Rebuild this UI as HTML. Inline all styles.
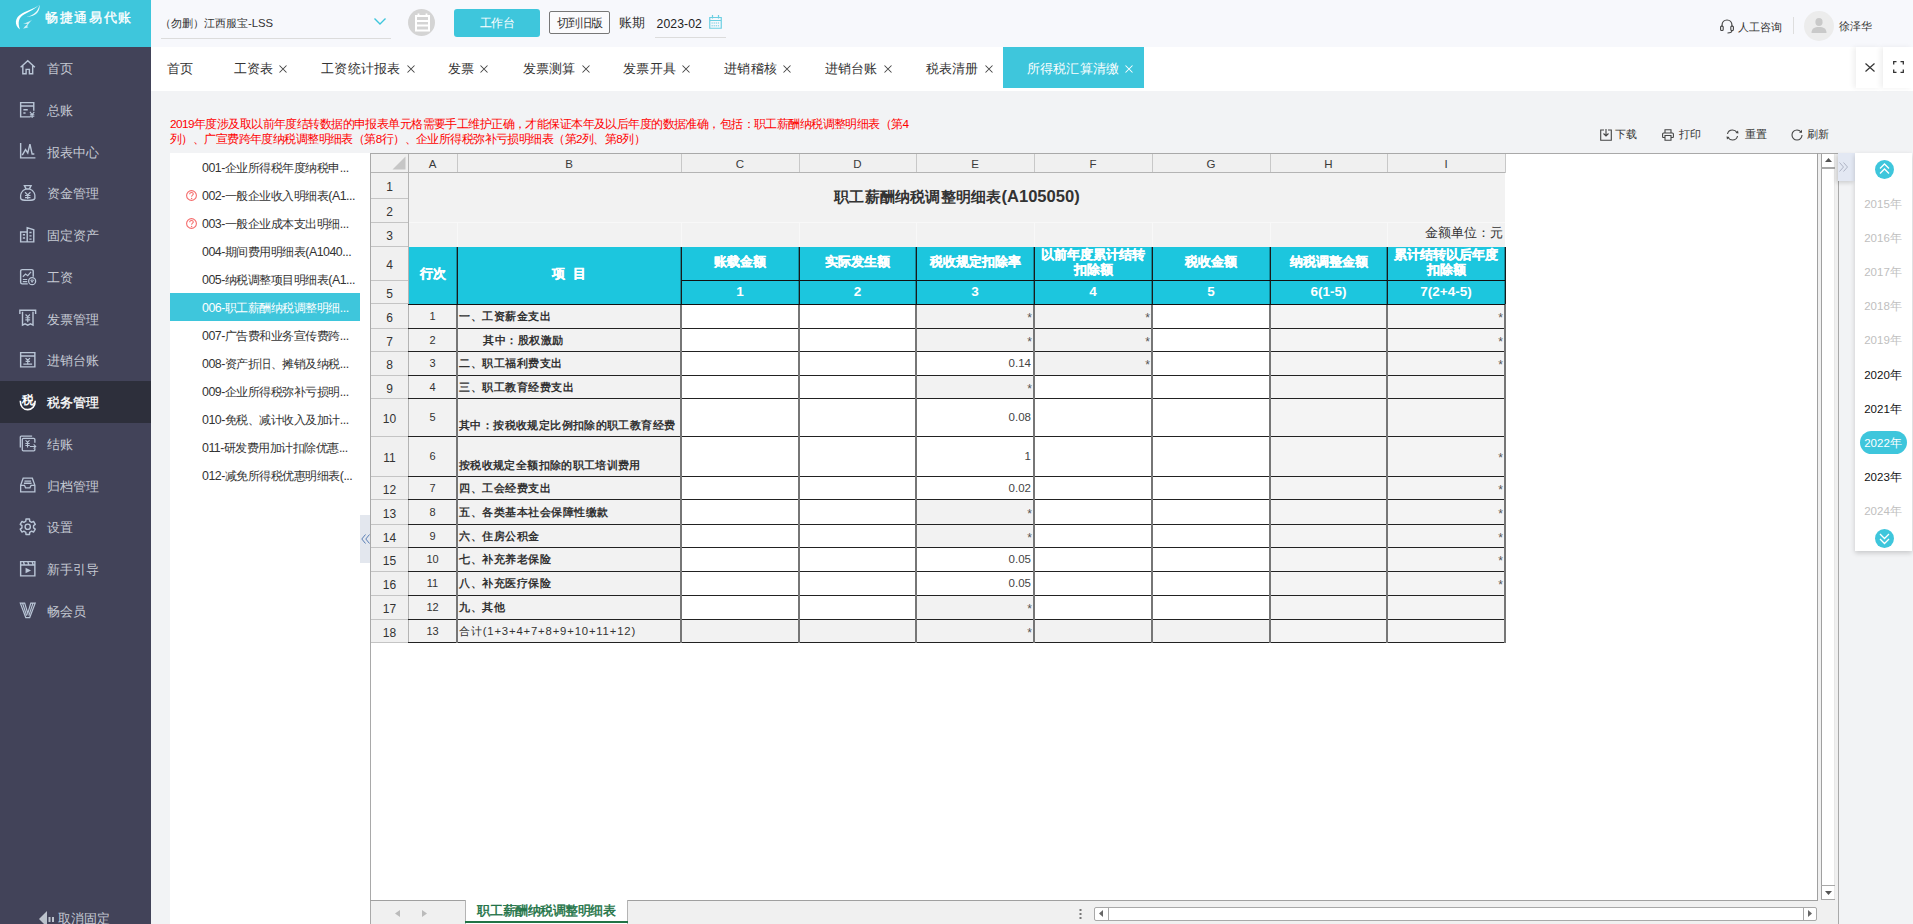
<!DOCTYPE html><html><head><meta charset="utf-8"><title>所得税汇算清缴</title><style>
*{box-sizing:border-box;margin:0;padding:0}
html,body{width:1913px;height:924px;overflow:hidden}
body{position:relative;background:#f2f3f5;font-family:"Liberation Sans",sans-serif;color:#333;}
.a{position:absolute;white-space:nowrap}
.t{position:absolute;white-space:nowrap;line-height:1}
svg{position:absolute;overflow:visible}
</style></head><body>
<div class="a" style="left:0;top:0;width:151px;height:924px;background:#424359"></div>
<div class="a" style="left:0;top:0;width:151px;height:47px;background:#3ec6dc"></div>
<svg style="left:10px;top:0px" width="40" height="35" viewBox="0 0 40 35"><path d="M10 29.5 C4 25 4.5 17.5 12 13.5 C18 10.5 25 8.5 29.4 4.8 C25.5 9 19.5 11.5 14 14.5 C8.5 17.5 7.5 23 10 29.5Z" fill="#fff"/><path d="M29.4 4.8 C30.5 10.5 26.5 16.8 16.5 16.9 C24 15.5 28.5 11 29.4 4.8Z" fill="#fff" opacity=".9"/><path d="M22.2 19.6 C19.5 21.8 16.5 23 13 23.6 L17.6 24 C15.8 25.6 14.2 27 13.2 28.7 C15.5 28.3 17 27.8 18.6 27.3 C16.5 27 16.8 25.5 22.2 19.6Z" fill="#fff" opacity=".75"/></svg>
<div class="t" style="left:45px;top:11.5px;font-size:12.6px;letter-spacing:1.7px;color:#fff;-webkit-text-stroke:0.35px #fff">畅捷通易代账</div>
<svg style="left:19px;top:58.8px" width="17.5" height="17.5" viewBox="0 0 16 16"><path d="M1.5 7.5 L8 1.5 L14.5 7.5 M3.5 6 V13.5 H6.5 V9.5 H9.5 V13.5 H12.5 V6" fill="none" stroke="#b9c5d6" stroke-width="1.3"/></svg>
<div class="t" style="left:47px;top:62.0px;font-size:13.3px;color:#c5c9d3">首页</div>
<svg style="left:19px;top:100.55px" width="17.5" height="17.5" viewBox="0 0 16 16"><path d="M10.5 14.5 H1.5 V1.5 H13.5 V9 M1.5 4.5 H13.5 M4 8 H8 M4 11 H6" fill="none" stroke="#b9c5d6" stroke-width="1.3"/><path d="M10 10 L12 12.5 L14 10 M10 12.5 H14 M10 14 H14 M12 12.5 V15.5" fill="none" stroke="#b9c5d6" stroke-width="1"/></svg>
<div class="t" style="left:47px;top:103.75px;font-size:13.3px;color:#c5c9d3">总账</div>
<svg style="left:19px;top:142.3px" width="17.5" height="17.5" viewBox="0 0 16 16"><path d="M1.5 1 V14.5 H15 M3 12 L6 7 L8 10 L10 2 L12 11 L14 11" fill="none" stroke="#b9c5d6" stroke-width="1.3"/></svg>
<div class="t" style="left:47px;top:145.5px;font-size:13.3px;color:#c5c9d3">报表中心</div>
<svg style="left:19px;top:184.05px" width="17.5" height="17.5" viewBox="0 0 16 16"><path d="M5 1.5 H11 L9.5 4.5 H6.5 Z M6.5 4.5 C2 6 1 10 1.5 13 C2 15 4 15 8 15 C12 15 14 15 14.5 13 C15 10 14 6 9.5 4.5" fill="none" stroke="#b9c5d6" stroke-width="1.3"/><path d="M5.5 7.5 L8 10 L10.5 7.5 M5.5 10.5 H10.5 M5.5 12.5 H10.5 M8 10 V14" fill="none" stroke="#b9c5d6" stroke-width="1.1"/></svg>
<div class="t" style="left:47px;top:187.25px;font-size:13.3px;color:#c5c9d3">资金管理</div>
<svg style="left:19px;top:225.8px" width="17.5" height="17.5" viewBox="0 0 16 16"><path d="M1.5 14.5 V5.5 H7.5 V1.5 L13.5 3.5 V14.5 Z M7.5 5.5 V14.5 M3.5 8 H5.5 M3.5 11 H5.5 M9.5 6 H11.5 M9.5 9 H11.5 M9.5 12 H11.5" fill="none" stroke="#b9c5d6" stroke-width="1.3"/></svg>
<div class="t" style="left:47px;top:229.0px;font-size:13.3px;color:#c5c9d3">固定资产</div>
<svg style="left:19px;top:267.55px" width="17.5" height="17.5" viewBox="0 0 16 16"><path d="M13 8 V3 C13 2 12.5 1.5 11.5 1.5 H3 C2 1.5 1.5 2 1.5 3 V13 C1.5 14 2 14.5 3 14.5 H8" fill="none" stroke="#b9c5d6" stroke-width="1.3"/><path d="M3.5 8 L6 5.5 L8 7 L11 3.5 M3.5 10.5 H7.5 M3.5 12.5 H7.5" fill="none" stroke="#b9c5d6" stroke-width="1.1"/><circle cx="12" cy="12" r="3.2" fill="none" stroke="#b9c5d6" stroke-width="1.2"/><path d="M10.8 11 H13.2 L12 13.2 Z" fill="none" stroke="#b9c5d6" stroke-width="0.9"/></svg>
<div class="t" style="left:47px;top:270.75px;font-size:13.3px;color:#c5c9d3">工资</div>
<svg style="left:19px;top:309.3px" width="17.5" height="17.5" viewBox="0 0 16 16"><path d="M0.8 4.5 V1.2 H15.2 V4.5" fill="none" stroke="#b9c5d6" stroke-width="1.3"/><path d="M3.2 2.5 V14.8 L5.5 13.6 L8 14.8 L10.5 13.6 L12.8 14.8 V2.5" fill="none" stroke="#b9c5d6" stroke-width="1.3"/><path d="M6 5 L8 7 L10 5 M5.8 8 H10.2 M5.8 10 H10.2 M8 7 V12" fill="none" stroke="#b9c5d6" stroke-width="1.1"/></svg>
<div class="t" style="left:47px;top:312.5px;font-size:13.3px;color:#c5c9d3">发票管理</div>
<svg style="left:19px;top:351.05px" width="17.5" height="17.5" viewBox="0 0 16 16"><path d="M1.5 1.5 H14.5 V14.5 H1.5 Z M1.5 4.5 H14.5 M4 12 H12" fill="none" stroke="#b9c5d6" stroke-width="1.3"/><path d="M6 6.5 L8 8.5 L10 6.5 M6 9.5 H10 M8 8.5 V12" fill="none" stroke="#b9c5d6" stroke-width="1.1"/></svg>
<div class="t" style="left:47px;top:354.25px;font-size:13.3px;color:#c5c9d3">进销台账</div>
<div class="a" style="left:0;top:381.0px;width:151px;height:42px;background:#2d2f3b"></div>
<svg style="left:19px;top:392.8px" width="17.5" height="17.5" viewBox="0 0 16 16"><path d="M1.2 7 C1.2 12 4 15.2 8 15.2 C12 15.2 14.8 12 14.8 7" fill="none" stroke="#fff" stroke-width="1.5"/><text x="8" y="10.5" font-size="11" fill="#fff" text-anchor="middle" font-weight="bold" font-family="Liberation Sans">税</text></svg>
<div class="t" style="left:47px;top:396.0px;font-size:13.3px;color:#fff;-webkit-text-stroke:0.3px #fff">税务管理</div>
<svg style="left:19px;top:434.55px" width="17.5" height="17.5" viewBox="0 0 16 16"><path d="M4 14.5 H13.5 C14 14.5 14.5 14 14.5 13.5 V12 M14.5 7 V4 C14.5 3.5 14 3 13.5 3 H4 C3.5 3 3 3.5 3 4 V13.5 C3 14 3.5 14.5 4 14.5 M1.2 11.5 V1.8 C1.2 1.4 1.5 1.1 1.9 1.1 H12" fill="none" stroke="#b9c5d6" stroke-width="1.2"/><path d="M6 4.8 L7.8 6.8 L9.6 4.8 M5.8 7.8 H9.8 M5.8 9.6 H9.8 M7.8 6.8 V11.5 M10 10.5 H15.2 M13.4 8.6 L15.3 10.5 L13.4 12.4" fill="none" stroke="#b9c5d6" stroke-width="1"/></svg>
<div class="t" style="left:47px;top:437.75px;font-size:13.3px;color:#c5c9d3">结账</div>
<svg style="left:19px;top:476.3px" width="17.5" height="17.5" viewBox="0 0 16 16"><path d="M1.5 8.5 L3.8 2 H12.2 L14.5 8.5 V14.5 H1.5 Z M1.5 8.5 H5 L6 10.8 H10 L11 8.5 H14.5 M5 4.6 H11 M4.5 6.6 H11.5" fill="none" stroke="#b9c5d6" stroke-width="1.2"/></svg>
<div class="t" style="left:47px;top:479.5px;font-size:13.3px;color:#c5c9d3">归档管理</div>
<svg style="left:19px;top:518.05px" width="17.5" height="17.5" viewBox="0 0 16 16"><path d="M6.38 0.98 L9.62 0.98 L9.76 2.89 L11.54 3.92 L13.27 3.09 L14.89 5.89 L13.30 6.97 L13.30 9.03 L14.89 10.11 L13.27 12.91 L11.54 12.08 L9.76 13.11 L9.62 15.02 L6.38 15.02 L6.24 13.11 L4.46 12.08 L2.73 12.91 L1.11 10.11 L2.70 9.03 L2.70 6.97 L1.11 5.89 L2.73 3.09 L4.46 3.92 L6.24 2.89Z" fill="none" stroke="#b9c5d6" stroke-width="1.3" stroke-linejoin="round"/><circle cx="8" cy="8" r="2.4" fill="none" stroke="#b9c5d6" stroke-width="1.3"/></svg>
<div class="t" style="left:47px;top:521.25px;font-size:13.3px;color:#c5c9d3">设置</div>
<svg style="left:19px;top:559.8px" width="17.5" height="17.5" viewBox="0 0 16 16"><path d="M1.5 1.5 H14.5 V14.5 H1.5 Z M1.5 4.5 H14.5 M4 1.5 L5 4.5 M8 1.5 L9 4.5 M12 1.5 L13 4.5" fill="none" stroke="#b9c5d6" stroke-width="1.3"/><path d="M6 7 L11 9.5 L6 12 Z" fill="#b9c5d6"/></svg>
<div class="t" style="left:47px;top:563.0px;font-size:13.3px;color:#c5c9d3">新手引导</div>
<svg style="left:19px;top:601.55px" width="17.5" height="17.5" viewBox="0 0 16 16"><path d="M1.2 1 H5.2 L8 10.5 L10.8 1 H14.8 L9.8 14.2 H6.2 Z M3.2 1 L7 12.5 M12.8 1 L9 12.5" fill="none" stroke="#b9c5d6" stroke-width="1.1"/></svg>
<div class="t" style="left:47px;top:604.75px;font-size:13.3px;color:#c5c9d3">畅会员</div>
<svg style="left:38px;top:910px" width="20" height="16" viewBox="0 0 20 16"><path d="M9 1 L1 9 L9 17 Z" fill="#bdc3cd"/><rect x="10.5" y="7" width="2" height="5" fill="#bdc3cd"/><rect x="14" y="7" width="2" height="5" fill="#bdc3cd"/></svg>
<div class="t" style="left:58px;top:912px;font-size:13px;color:#c5c9d3">取消固定</div>
<div class="a" style="left:151px;top:0;width:1762px;height:47px;background:#f7f8fc"></div>
<div class="t" style="left:160px;top:18px;font-size:11.3px;color:#333">（勿删）江西服宝-LSS</div>
<div class="a" style="left:161px;top:38px;width:230px;height:1px;background:#dcdcdc"></div>
<svg style="left:374px;top:18px" width="12" height="7" viewBox="0 0 12 7"><path d="M0.5 0.5 L6 6 L11.5 0.5" fill="none" stroke="#3ec6dc" stroke-width="1.4"/></svg>
<div class="a" style="left:408px;top:9px;width:27px;height:27px;border-radius:50%;background:#d4d4d4"></div>
<svg style="left:414px;top:13px" width="17" height="19" viewBox="0 0 17 19"><path d="M2 3 H15 V17.5 H2 Z" fill="none" stroke="#fff" stroke-width="2"/><path d="M4.5 0.5 V4 M12.5 0.5 V4" stroke="#fff" stroke-width="1.8"/><path d="M3 8 H14 M3 12.5 H14" stroke="#fff" stroke-width="1.8"/></svg>
<div class="a" style="left:454px;top:9px;width:86px;height:28px;border-radius:3px;background:#3ec6dc"></div>
<div class="t" style="left:480px;top:17px;font-size:12px;letter-spacing:-0.6px;color:#fff">工作台</div>
<div class="a" style="left:549px;top:11px;width:61px;height:23px;border-radius:2px;border:1px solid #777;background:#fbfbfd"></div>
<div class="t" style="left:557px;top:16.5px;font-size:11.6px;letter-spacing:-0.6px;color:#333">切到旧版</div>
<div class="t" style="left:619px;top:16px;font-size:13px;color:#333">账期</div>
<div class="t" style="left:656.5px;top:17.5px;font-size:12.2px;letter-spacing:0.1px;color:#222">2023-02</div>
<svg style="left:709px;top:15px" width="13" height="14" viewBox="0 0 13 14"><path d="M0.75 2.5 H12.25 V13.25 H0.75 Z M0.75 5.5 H12.25" fill="none" stroke="#6ccfe2" stroke-width="1.2"/><path d="M3.5 0 V3.5 M9.5 0 V3.5" stroke="#6ccfe2" stroke-width="1.2"/><path d="M2.5 8 H10.5 M2.5 10.8 H10.5" stroke="#6ccfe2" stroke-width="1" stroke-dasharray="1.3 0.8"/></svg>
<div class="a" style="left:655px;top:37px;width:71px;height:1px;background:#dcdcdc"></div>
<svg style="left:1720px;top:19px" width="14" height="15" viewBox="0 0 14 15"><path d="M2 8 V6.5 C2 3 4.3 1 7 1 C9.7 1 12 3 12 6.5 V8" fill="none" stroke="#444" stroke-width="1.2"/><rect x="0.6" y="7" width="2.6" height="4.5" rx="1" fill="none" stroke="#444" stroke-width="1.1"/><rect x="10.8" y="7" width="2.6" height="4.5" rx="1" fill="none" stroke="#444" stroke-width="1.1"/><path d="M12 11.5 C12 13 10 14 7.5 14" fill="none" stroke="#444" stroke-width="1.1"/></svg>
<div class="t" style="left:1738px;top:22px;font-size:11.1px;color:#333">人工咨询</div>
<div class="a" style="left:1793px;top:17px;width:1px;height:17px;background:#dedede"></div>
<div class="a" style="left:1804px;top:11px;width:30px;height:30px;border-radius:50%;background:#ececec"></div>
<svg style="left:1810px;top:17px" width="18" height="17" viewBox="0 0 18 17"><ellipse cx="9" cy="5" rx="3.6" ry="4" fill="#c9c9c9"/><path d="M1.5 16 C1.5 11.5 4.5 10 9 10 C13.5 10 16.5 11.5 16.5 16 Z" fill="#c9c9c9"/></svg>
<div class="t" style="left:1839px;top:21px;font-size:11.1px;color:#333">徐泽华</div>
<div class="a" style="left:151px;top:47px;width:1762px;height:44px;background:#fff"></div>
<div class="t" style="left:167.0px;top:62px;font-size:13.4px;letter-spacing:0.25px;color:#333">首页</div>
<div class="t" style="left:233.5px;top:62px;font-size:13.4px;letter-spacing:0.25px;color:#333">工资表</div>
<svg style="left:279.2px;top:65px" width="8" height="8" viewBox="0 0 8 8"><path d="M0.5 0.5 L7.5 7.5 M7.5 0.5 L0.5 7.5" stroke="#444" stroke-width="1.05"/></svg>
<div class="t" style="left:321.0px;top:62px;font-size:13.4px;letter-spacing:0.25px;color:#333">工资统计报表</div>
<svg style="left:406.9px;top:65px" width="8" height="8" viewBox="0 0 8 8"><path d="M0.5 0.5 L7.5 7.5 M7.5 0.5 L0.5 7.5" stroke="#444" stroke-width="1.05"/></svg>
<div class="t" style="left:447.5px;top:62px;font-size:13.4px;letter-spacing:0.25px;color:#333">发票</div>
<svg style="left:479.8px;top:65px" width="8" height="8" viewBox="0 0 8 8"><path d="M0.5 0.5 L7.5 7.5 M7.5 0.5 L0.5 7.5" stroke="#444" stroke-width="1.05"/></svg>
<div class="t" style="left:522.5px;top:62px;font-size:13.4px;letter-spacing:0.25px;color:#333">发票测算</div>
<svg style="left:581.6px;top:65px" width="8" height="8" viewBox="0 0 8 8"><path d="M0.5 0.5 L7.5 7.5 M7.5 0.5 L0.5 7.5" stroke="#444" stroke-width="1.05"/></svg>
<div class="t" style="left:623.0px;top:62px;font-size:13.4px;letter-spacing:0.25px;color:#333">发票开具</div>
<svg style="left:682.1px;top:65px" width="8" height="8" viewBox="0 0 8 8"><path d="M0.5 0.5 L7.5 7.5 M7.5 0.5 L0.5 7.5" stroke="#444" stroke-width="1.05"/></svg>
<div class="t" style="left:724.0px;top:62px;font-size:13.4px;letter-spacing:0.25px;color:#333">进销稽核</div>
<svg style="left:783.1px;top:65px" width="8" height="8" viewBox="0 0 8 8"><path d="M0.5 0.5 L7.5 7.5 M7.5 0.5 L0.5 7.5" stroke="#444" stroke-width="1.05"/></svg>
<div class="t" style="left:824.5px;top:62px;font-size:13.4px;letter-spacing:0.25px;color:#333">进销台账</div>
<svg style="left:883.6px;top:65px" width="8" height="8" viewBox="0 0 8 8"><path d="M0.5 0.5 L7.5 7.5 M7.5 0.5 L0.5 7.5" stroke="#444" stroke-width="1.05"/></svg>
<div class="t" style="left:925.5px;top:62px;font-size:13.4px;letter-spacing:0.25px;color:#333">税表清册</div>
<svg style="left:984.6px;top:65px" width="8" height="8" viewBox="0 0 8 8"><path d="M0.5 0.5 L7.5 7.5 M7.5 0.5 L0.5 7.5" stroke="#444" stroke-width="1.05"/></svg>
<div class="a" style="left:1003px;top:47px;width:141px;height:41px;background:#3ec6dc"></div>
<div class="t" style="left:1026.5px;top:62px;font-size:13.4px;letter-spacing:0.3px;color:#fff">所得税汇算清缴</div>
<svg style="left:1125px;top:65px" width="8" height="8" viewBox="0 0 8 8"><path d="M0.5 0.5 L7.5 7.5 M7.5 0.5 L0.5 7.5" stroke="#fff" stroke-width="1.05"/></svg>
<div class="a" style="left:1856px;top:47px;width:26px;height:41px;background:#fff;box-shadow:-3px 0 5px rgba(0,0,0,0.06)"></div>
<div class="a" style="left:1883px;top:47px;width:30px;height:41px;background:#fff;box-shadow:-3px 0 5px rgba(0,0,0,0.06)"></div>
<svg style="left:1865px;top:63px" width="10" height="9" viewBox="0 0 10 9"><path d="M0.5 0.5 L9.5 8.5 M9.5 0.5 L0.5 8.5" stroke="#333" stroke-width="1.2"/></svg>
<svg style="left:1893px;top:61px" width="11" height="12" viewBox="0 0 11 12"><path d="M0.7 3.5 V0.7 H3.5 M7.5 0.7 H10.3 V3.5 M10.3 8.5 V11.3 H7.5 M3.5 11.3 H0.7 V8.5" fill="none" stroke="#333" stroke-width="1.3"/></svg>
<div class="t" style="left:170px;top:116.5px;font-size:11.8px;letter-spacing:-0.57px;color:#f00;line-height:15px">2019年度涉及取以前年度结转数据的申报表单元格需要手工维护正确，才能保证本年及以后年度的数据准确，包括：职工薪酬纳税调整明细表（第4<br>列）、广宣费跨年度纳税调整明细表（第8行）、企业所得税弥补亏损明细表（第2列、第8列）</div>
<svg style="left:1599.5px;top:129px" width="13" height="12" viewBox="0 0 13 12"><path d="M4 1 H0.7 V11.3 H11.3 V1 H8" fill="none" stroke="#444" stroke-width="1.1"/><path d="M6 0 V7 M3.5 4.5 L6 7 L8.5 4.5" fill="none" stroke="#444" stroke-width="1.1"/></svg>
<div class="t" style="left:1615px;top:129px;font-size:11.1px;color:#333">下载</div>
<svg style="left:1661.5px;top:129px" width="13" height="12" viewBox="0 0 13 12"><path d="M3 4 V0.8 H9 V4 M3 8.5 H1 C0.7 8.5 0.6 8 0.6 7.5 V5 C0.6 4.3 1 4 1.6 4 H10.4 C11 4 11.4 4.3 11.4 5 V7.5 C11.4 8 11.2 8.5 11 8.5 H9 M3 6.5 H9 V11.3 H3 Z" fill="none" stroke="#444" stroke-width="1.1"/></svg>
<div class="t" style="left:1679px;top:129px;font-size:11.1px;color:#333">打印</div>
<svg style="left:1725.5px;top:129px" width="13" height="12" viewBox="0 0 13 12"><path d="M1.5 5 C2 2.5 4 1 6.5 1 C8.5 1 10 2 11 3.5 M11.5 7 C11 9.5 9 11 6.5 11 C4.5 11 3 10 2 8.5" fill="none" stroke="#444" stroke-width="1.1"/><path d="M9.5 4 L12.5 4.5 L12 1.5 Z M3.5 8 L0.5 7.5 L1 10.5 Z" fill="#444"/></svg>
<div class="t" style="left:1744.5px;top:129px;font-size:11.1px;color:#333">重置</div>
<svg style="left:1791px;top:129px" width="13" height="12" viewBox="0 0 13 12"><path d="M10 3 C9 1.7 7.6 1 6 1 C3.2 1 1 3.2 1 6 C1 8.8 3.2 11 6 11 C8.8 11 11 8.8 11 6" fill="none" stroke="#444" stroke-width="1.1"/><path d="M8 3.8 L11 3.8 L11 0.8 Z" fill="#444"/></svg>
<div class="t" style="left:1807px;top:129px;font-size:11.1px;color:#333">刷新</div>
<div class="a" style="left:170px;top:153px;width:200px;height:771px;background:#fff"></div>
<div class="t" style="left:202px;top:162px;font-size:12.4px;letter-spacing:-0.5px;color:#333">001-企业所得税年度纳税申...</div>
<div class="t" style="left:202px;top:190px;font-size:12.4px;letter-spacing:-0.5px;color:#333">002-一般企业收入明细表(A1...</div>
<svg style="left:186px;top:190px" width="11" height="11" viewBox="0 0 11 11"><circle cx="5.5" cy="5.5" r="4.9" fill="none" stroke="#f56c6c" stroke-width="1.1"/><path d="M3.7 4.3 C3.7 3 4.5 2.4 5.5 2.4 C6.5 2.4 7.3 3 7.3 4 C7.3 5.1 5.6 5.3 5.6 6.7" fill="none" stroke="#f56c6c" stroke-width="1.05"/><circle cx="5.6" cy="8.4" r="0.7" fill="#f56c6c"/></svg>
<div class="t" style="left:202px;top:218px;font-size:12.4px;letter-spacing:-0.5px;color:#333">003-一般企业成本支出明细...</div>
<svg style="left:186px;top:218px" width="11" height="11" viewBox="0 0 11 11"><circle cx="5.5" cy="5.5" r="4.9" fill="none" stroke="#f56c6c" stroke-width="1.1"/><path d="M3.7 4.3 C3.7 3 4.5 2.4 5.5 2.4 C6.5 2.4 7.3 3 7.3 4 C7.3 5.1 5.6 5.3 5.6 6.7" fill="none" stroke="#f56c6c" stroke-width="1.05"/><circle cx="5.6" cy="8.4" r="0.7" fill="#f56c6c"/></svg>
<div class="t" style="left:202px;top:246px;font-size:12.4px;letter-spacing:-0.5px;color:#333">004-期间费用明细表(A1040...</div>
<div class="t" style="left:202px;top:274px;font-size:12.4px;letter-spacing:-0.5px;color:#333">005-纳税调整项目明细表(A1...</div>
<div class="a" style="left:170px;top:293px;width:190px;height:28px;background:#3ec6dc"></div>
<div class="t" style="left:202px;top:302px;font-size:12.4px;letter-spacing:-0.5px;color:#fff">006-职工薪酬纳税调整明细...</div>
<div class="t" style="left:202px;top:330px;font-size:12.4px;letter-spacing:-0.5px;color:#333">007-广告费和业务宣传费跨...</div>
<div class="t" style="left:202px;top:358px;font-size:12.4px;letter-spacing:-0.5px;color:#333">008-资产折旧、摊销及纳税...</div>
<div class="t" style="left:202px;top:386px;font-size:12.4px;letter-spacing:-0.5px;color:#333">009-企业所得税弥补亏损明...</div>
<div class="t" style="left:202px;top:414px;font-size:12.4px;letter-spacing:-0.5px;color:#333">010-免税、减计收入及加计...</div>
<div class="t" style="left:202px;top:442px;font-size:12.4px;letter-spacing:-0.5px;color:#333">011-研发费用加计扣除优惠...</div>
<div class="t" style="left:202px;top:470px;font-size:12.4px;letter-spacing:-0.5px;color:#333">012-减免所得税优惠明细表(...</div>
<div class="a" style="left:360px;top:515px;width:10px;height:48px;background:#e3e7ee"></div>
<svg style="left:361px;top:534px" width="9" height="10" viewBox="0 0 9 10"><path d="M4.5 0.5 L0.8 5 L4.5 9.5 M8.5 0.5 L4.8 5 L8.5 9.5" fill="none" stroke="#5a7fb5" stroke-width="1"/></svg>
<div class="a" style="left:370px;top:153px;width:1468px;height:771px;background:#f0f0f0"></div>
<div class="a" style="left:371px;top:154px;width:1447px;height:747px;background:#fff"></div>
<div class="a" style="left:370px;top:153px;width:1468px;height:1px;background:#a9a9a9"></div>
<div class="a" style="left:370px;top:153px;width:1px;height:771px;background:#a9a9a9"></div>
<div class="a" style="left:1817px;top:153px;width:1px;height:748px;background:#a0a0a0"></div>
<div class="a" style="left:370px;top:900px;width:1448px;height:1px;background:#a0a0a0"></div>
<div class="a" style="left:1838px;top:153px;width:1px;height:771px;background:#a9a9a9"></div>
<div class="a" style="left:371px;top:154px;width:1134px;height:19px;background:#f0f0f0"></div>
<div class="a" style="left:371px;top:173px;width:37px;height:470px;background:#f0f0f0"></div>
<svg style="left:392px;top:156px" width="14" height="14" viewBox="0 0 14 14"><path d="M13.5 0.5 V13.5 H0.5 Z" fill="#c6c6c6"/></svg>
<div class="t" style="left:408px;top:158.5px;width:49px;text-align:center;font-size:11.5px;color:#3a3a3a">A</div>
<div class="a" style="left:457px;top:154px;width:1px;height:19px;background:#c8c8c8"></div>
<div class="t" style="left:457px;top:158.5px;width:224px;text-align:center;font-size:11.5px;color:#3a3a3a">B</div>
<div class="a" style="left:681px;top:154px;width:1px;height:19px;background:#c8c8c8"></div>
<div class="t" style="left:681px;top:158.5px;width:118px;text-align:center;font-size:11.5px;color:#3a3a3a">C</div>
<div class="a" style="left:799px;top:154px;width:1px;height:19px;background:#c8c8c8"></div>
<div class="t" style="left:799px;top:158.5px;width:117px;text-align:center;font-size:11.5px;color:#3a3a3a">D</div>
<div class="a" style="left:916px;top:154px;width:1px;height:19px;background:#c8c8c8"></div>
<div class="t" style="left:916px;top:158.5px;width:118px;text-align:center;font-size:11.5px;color:#3a3a3a">E</div>
<div class="a" style="left:1034px;top:154px;width:1px;height:19px;background:#c8c8c8"></div>
<div class="t" style="left:1034px;top:158.5px;width:118px;text-align:center;font-size:11.5px;color:#3a3a3a">F</div>
<div class="a" style="left:1152px;top:154px;width:1px;height:19px;background:#c8c8c8"></div>
<div class="t" style="left:1152px;top:158.5px;width:118px;text-align:center;font-size:11.5px;color:#3a3a3a">G</div>
<div class="a" style="left:1270px;top:154px;width:1px;height:19px;background:#c8c8c8"></div>
<div class="t" style="left:1270px;top:158.5px;width:117px;text-align:center;font-size:11.5px;color:#3a3a3a">H</div>
<div class="a" style="left:1387px;top:154px;width:1px;height:19px;background:#c8c8c8"></div>
<div class="t" style="left:1387px;top:158.5px;width:118px;text-align:center;font-size:11.5px;color:#3a3a3a">I</div>
<div class="a" style="left:1505px;top:154px;width:1px;height:19px;background:#c8c8c8"></div>
<div class="a" style="left:408px;top:154px;width:1px;height:489px;background:#b4b4b4"></div>
<div class="a" style="left:371px;top:172px;width:1134px;height:1px;background:#b4b4b4"></div>
<div class="t" style="left:371px;top:181.0px;width:37px;text-align:center;font-size:12px;color:#333">1</div>
<div class="a" style="left:371px;top:198px;width:37px;height:1px;background:#c4c4c4"></div>
<div class="t" style="left:371px;top:206.0px;width:37px;text-align:center;font-size:12px;color:#333">2</div>
<div class="a" style="left:371px;top:222px;width:37px;height:1px;background:#c4c4c4"></div>
<div class="t" style="left:371px;top:230.0px;width:37px;text-align:center;font-size:12px;color:#333">3</div>
<div class="a" style="left:371px;top:246px;width:37px;height:1px;background:#c4c4c4"></div>
<div class="t" style="left:371px;top:259.0px;width:37px;text-align:center;font-size:12px;color:#333">4</div>
<div class="a" style="left:371px;top:280px;width:37px;height:1px;background:#c4c4c4"></div>
<div class="t" style="left:371px;top:287.5px;width:37px;text-align:center;font-size:12px;color:#333">5</div>
<div class="a" style="left:371px;top:303px;width:37px;height:1px;background:#c4c4c4"></div>
<div class="t" style="left:371px;top:311.5px;width:37px;text-align:center;font-size:12px;color:#333">6</div>
<div class="a" style="left:371px;top:328px;width:37px;height:1px;background:#c4c4c4"></div>
<div class="t" style="left:371px;top:335.5px;width:37px;text-align:center;font-size:12px;color:#333">7</div>
<div class="a" style="left:371px;top:351px;width:37px;height:1px;background:#c4c4c4"></div>
<div class="t" style="left:371px;top:359.0px;width:37px;text-align:center;font-size:12px;color:#333">8</div>
<div class="a" style="left:371px;top:375px;width:37px;height:1px;background:#c4c4c4"></div>
<div class="t" style="left:371px;top:382.5px;width:37px;text-align:center;font-size:12px;color:#333">9</div>
<div class="a" style="left:371px;top:398px;width:37px;height:1px;background:#c4c4c4"></div>
<div class="t" style="left:371px;top:413.0px;width:37px;text-align:center;font-size:12px;color:#333">10</div>
<div class="a" style="left:371px;top:436px;width:37px;height:1px;background:#c4c4c4"></div>
<div class="t" style="left:371px;top:452.0px;width:37px;text-align:center;font-size:12px;color:#333">11</div>
<div class="a" style="left:371px;top:476px;width:37px;height:1px;background:#c4c4c4"></div>
<div class="t" style="left:371px;top:483.5px;width:37px;text-align:center;font-size:12px;color:#333">12</div>
<div class="a" style="left:371px;top:499px;width:37px;height:1px;background:#c4c4c4"></div>
<div class="t" style="left:371px;top:507.5px;width:37px;text-align:center;font-size:12px;color:#333">13</div>
<div class="a" style="left:371px;top:524px;width:37px;height:1px;background:#c4c4c4"></div>
<div class="t" style="left:371px;top:531.5px;width:37px;text-align:center;font-size:12px;color:#333">14</div>
<div class="a" style="left:371px;top:547px;width:37px;height:1px;background:#c4c4c4"></div>
<div class="t" style="left:371px;top:555.0px;width:37px;text-align:center;font-size:12px;color:#333">15</div>
<div class="a" style="left:371px;top:571px;width:37px;height:1px;background:#c4c4c4"></div>
<div class="t" style="left:371px;top:579.0px;width:37px;text-align:center;font-size:12px;color:#333">16</div>
<div class="a" style="left:371px;top:595px;width:37px;height:1px;background:#c4c4c4"></div>
<div class="t" style="left:371px;top:603.0px;width:37px;text-align:center;font-size:12px;color:#333">17</div>
<div class="a" style="left:371px;top:619px;width:37px;height:1px;background:#c4c4c4"></div>
<div class="t" style="left:371px;top:626.5px;width:37px;text-align:center;font-size:12px;color:#333">18</div>
<div class="a" style="left:371px;top:642px;width:37px;height:1px;background:#c4c4c4"></div>
<div class="a" style="left:409px;top:173px;width:1096px;height:74px;background:#f2f2f2"></div>
<div class="a" style="left:409px;top:222px;width:1096px;height:1px;background:#f8f8f8"></div>
<div class="a" style="left:457px;top:223px;width:1px;height:24px;background:#f8f8f8"></div>
<div class="a" style="left:681px;top:223px;width:1px;height:24px;background:#f8f8f8"></div>
<div class="a" style="left:799px;top:223px;width:1px;height:24px;background:#f8f8f8"></div>
<div class="a" style="left:916px;top:223px;width:1px;height:24px;background:#f8f8f8"></div>
<div class="a" style="left:1034px;top:223px;width:1px;height:24px;background:#f8f8f8"></div>
<div class="a" style="left:1152px;top:223px;width:1px;height:24px;background:#f8f8f8"></div>
<div class="a" style="left:1270px;top:223px;width:1px;height:24px;background:#f8f8f8"></div>
<div class="a" style="left:1387px;top:223px;width:1px;height:24px;background:#f8f8f8"></div>
<div class="t" style="left:409px;top:189px;width:1096px;text-align:center;font-size:15px;font-weight:bold;color:#333"><span style="letter-spacing:0.2px">职工薪酬纳税调整明细表</span><span style="font-size:16.6px;position:relative;top:-0.5px">(A105050)</span></div>
<div class="t" style="left:1387px;top:226.5px;width:116px;text-align:right;font-size:12.5px;color:#333">金额单位：元</div>
<div class="a" style="left:409px;top:247px;width:1096px;height:57px;background:#1cc6de"></div>
<div class="t" style="left:408px;top:267px;width:49px;text-align:center;font-size:13.3px;font-weight:bold;color:#fff;-webkit-text-stroke:0.3px #fff;line-height:14.5px">行次</div>
<div class="t" style="left:457px;top:267px;width:224px;text-align:center;font-size:13.3px;font-weight:bold;color:#fff;-webkit-text-stroke:0.3px #fff;line-height:14.5px">项&nbsp;&nbsp;目</div>
<div class="t" style="left:681px;top:255px;width:118px;text-align:center;font-size:13.3px;font-weight:bold;color:#fff;-webkit-text-stroke:0.3px #fff;line-height:14.5px">账载金额</div>
<div class="t" style="left:799px;top:255px;width:117px;text-align:center;font-size:13.3px;font-weight:bold;color:#fff;-webkit-text-stroke:0.3px #fff;line-height:14.5px">实际发生额</div>
<div class="t" style="left:916px;top:255px;width:118px;text-align:center;font-size:13.3px;font-weight:bold;color:#fff;-webkit-text-stroke:0.3px #fff;line-height:14.5px">税收规定扣除率</div>
<div class="t" style="left:1034px;top:248px;width:118px;text-align:center;font-size:13.3px;font-weight:bold;color:#fff;-webkit-text-stroke:0.3px #fff;line-height:14.5px">以前年度累计结转<br>扣除额</div>
<div class="t" style="left:1152px;top:255px;width:118px;text-align:center;font-size:13.3px;font-weight:bold;color:#fff;-webkit-text-stroke:0.3px #fff;line-height:14.5px">税收金额</div>
<div class="t" style="left:1270px;top:255px;width:117px;text-align:center;font-size:13.3px;font-weight:bold;color:#fff;-webkit-text-stroke:0.3px #fff;line-height:14.5px">纳税调整金额</div>
<div class="t" style="left:1387px;top:248px;width:118px;text-align:center;font-size:13.3px;font-weight:bold;color:#fff;-webkit-text-stroke:0.3px #fff;line-height:14.5px">累计结转以后年度<br>扣除额</div>
<div class="t" style="left:681px;top:285px;width:118px;text-align:center;font-size:13.5px;font-weight:bold;color:#fff">1</div>
<div class="t" style="left:799px;top:285px;width:117px;text-align:center;font-size:13.5px;font-weight:bold;color:#fff">2</div>
<div class="t" style="left:916px;top:285px;width:118px;text-align:center;font-size:13.5px;font-weight:bold;color:#fff">3</div>
<div class="t" style="left:1034px;top:285px;width:118px;text-align:center;font-size:13.5px;font-weight:bold;color:#fff">4</div>
<div class="t" style="left:1152px;top:285px;width:118px;text-align:center;font-size:13.5px;font-weight:bold;color:#fff">5</div>
<div class="t" style="left:1270px;top:285px;width:117px;text-align:center;font-size:13.5px;font-weight:bold;color:#fff">6(1-5)</div>
<div class="t" style="left:1387px;top:285px;width:118px;text-align:center;font-size:13.5px;font-weight:bold;color:#fff">7(2+4-5)</div>
<div class="a" style="left:681px;top:280px;width:824px;height:1px;background:#111"></div>
<div class="a" style="left:457px;top:247px;width:1px;height:57px;background:#1a1a1a"></div>
<div class="a" style="left:456px;top:247px;width:1px;height:57px;background:rgba(0,0,0,0.3)"></div>
<div class="a" style="left:681px;top:247px;width:1px;height:57px;background:#1a1a1a"></div>
<div class="a" style="left:680px;top:247px;width:1px;height:57px;background:rgba(0,0,0,0.3)"></div>
<div class="a" style="left:799px;top:247px;width:1px;height:57px;background:#1a1a1a"></div>
<div class="a" style="left:798px;top:247px;width:1px;height:57px;background:rgba(0,0,0,0.3)"></div>
<div class="a" style="left:916px;top:247px;width:1px;height:57px;background:#1a1a1a"></div>
<div class="a" style="left:915px;top:247px;width:1px;height:57px;background:rgba(0,0,0,0.3)"></div>
<div class="a" style="left:1034px;top:247px;width:1px;height:57px;background:#1a1a1a"></div>
<div class="a" style="left:1033px;top:247px;width:1px;height:57px;background:rgba(0,0,0,0.3)"></div>
<div class="a" style="left:1152px;top:247px;width:1px;height:57px;background:#1a1a1a"></div>
<div class="a" style="left:1151px;top:247px;width:1px;height:57px;background:rgba(0,0,0,0.3)"></div>
<div class="a" style="left:1270px;top:247px;width:1px;height:57px;background:#1a1a1a"></div>
<div class="a" style="left:1269px;top:247px;width:1px;height:57px;background:rgba(0,0,0,0.3)"></div>
<div class="a" style="left:1387px;top:247px;width:1px;height:57px;background:#1a1a1a"></div>
<div class="a" style="left:1386px;top:247px;width:1px;height:57px;background:rgba(0,0,0,0.3)"></div>
<div class="a" style="left:1505px;top:247px;width:1px;height:57px;background:#1a1a1a"></div>
<div class="a" style="left:1504px;top:247px;width:1px;height:57px;background:rgba(0,0,0,0.3)"></div>
<div class="a" style="left:409px;top:304px;width:272px;height:25px;background:#f2f2f2"></div>
<div class="a" style="left:916px;top:304px;width:118px;height:25px;background:#f2f2f2"></div>
<div class="a" style="left:1034px;top:304px;width:118px;height:25px;background:#f2f2f2"></div>
<div class="a" style="left:1270px;top:304px;width:117px;height:25px;background:#f4f4f4"></div>
<div class="a" style="left:1387px;top:304px;width:118px;height:25px;background:#f4f4f4"></div>
<div class="t" style="left:408px;top:310.5px;width:49px;text-align:center;font-size:11px;color:#333">1</div>
<div class="t" style="left:459px;top:310.5px;font-size:11.3px;letter-spacing:0.5px;font-weight:bold;color:#333">一、工资薪金支出</div>
<div class="t" style="left:916px;top:311.5px;width:116px;text-align:right;font-size:12px;color:#555">*</div>
<div class="t" style="left:1034px;top:311.5px;width:116px;text-align:right;font-size:12px;color:#555">*</div>
<div class="t" style="left:1387px;top:311.5px;width:116px;text-align:right;font-size:12px;color:#555">*</div>
<div class="a" style="left:408px;top:328px;width:1097px;height:1px;background:#222"></div>
<div class="a" style="left:409px;top:329px;width:272px;height:23px;background:#f2f2f2"></div>
<div class="a" style="left:916px;top:329px;width:118px;height:23px;background:#f2f2f2"></div>
<div class="a" style="left:1034px;top:329px;width:118px;height:23px;background:#f2f2f2"></div>
<div class="a" style="left:1270px;top:329px;width:117px;height:23px;background:#f4f4f4"></div>
<div class="a" style="left:1387px;top:329px;width:118px;height:23px;background:#f4f4f4"></div>
<div class="t" style="left:408px;top:334.5px;width:49px;text-align:center;font-size:11px;color:#333">2</div>
<div class="t" style="left:483px;top:334.5px;font-size:11.3px;letter-spacing:0.5px;font-weight:bold;color:#333">其中：股权激励</div>
<div class="t" style="left:916px;top:335.5px;width:116px;text-align:right;font-size:12px;color:#555">*</div>
<div class="t" style="left:1034px;top:335.5px;width:116px;text-align:right;font-size:12px;color:#555">*</div>
<div class="t" style="left:1387px;top:335.5px;width:116px;text-align:right;font-size:12px;color:#555">*</div>
<div class="a" style="left:408px;top:351px;width:1097px;height:1px;background:#222"></div>
<div class="a" style="left:409px;top:352px;width:272px;height:24px;background:#f2f2f2"></div>
<div class="a" style="left:1034px;top:352px;width:118px;height:24px;background:#f2f2f2"></div>
<div class="a" style="left:1270px;top:352px;width:117px;height:24px;background:#f4f4f4"></div>
<div class="a" style="left:1387px;top:352px;width:118px;height:24px;background:#f4f4f4"></div>
<div class="t" style="left:408px;top:358.0px;width:49px;text-align:center;font-size:11px;color:#333">3</div>
<div class="t" style="left:459px;top:358.0px;font-size:11.3px;letter-spacing:0.5px;font-weight:bold;color:#333">二、职工福利费支出</div>
<div class="t" style="left:916px;top:358.0px;width:115px;text-align:right;font-size:11.5px;color:#444">0.14</div>
<div class="t" style="left:1034px;top:359.0px;width:116px;text-align:right;font-size:12px;color:#555">*</div>
<div class="t" style="left:1387px;top:359.0px;width:116px;text-align:right;font-size:12px;color:#555">*</div>
<div class="a" style="left:408px;top:375px;width:1097px;height:1px;background:#222"></div>
<div class="a" style="left:409px;top:376px;width:272px;height:23px;background:#f2f2f2"></div>
<div class="a" style="left:916px;top:376px;width:118px;height:23px;background:#f2f2f2"></div>
<div class="a" style="left:1270px;top:376px;width:117px;height:23px;background:#f4f4f4"></div>
<div class="a" style="left:1387px;top:376px;width:118px;height:23px;background:#f4f4f4"></div>
<div class="t" style="left:408px;top:381.5px;width:49px;text-align:center;font-size:11px;color:#333">4</div>
<div class="t" style="left:459px;top:381.5px;font-size:11.3px;letter-spacing:0.5px;font-weight:bold;color:#333">三、职工教育经费支出</div>
<div class="t" style="left:916px;top:382.5px;width:116px;text-align:right;font-size:12px;color:#555">*</div>
<div class="a" style="left:408px;top:398px;width:1097px;height:1px;background:#222"></div>
<div class="a" style="left:409px;top:399px;width:272px;height:38px;background:#f2f2f2"></div>
<div class="a" style="left:1270px;top:399px;width:117px;height:38px;background:#f4f4f4"></div>
<div class="a" style="left:1387px;top:399px;width:118px;height:38px;background:#f4f4f4"></div>
<div class="t" style="left:408px;top:412.0px;width:49px;text-align:center;font-size:11px;color:#333">5</div>
<div class="t" style="left:459px;top:420px;font-size:11.3px;letter-spacing:0.39px;font-weight:bold;color:#333">其中：按税收规定比例扣除的职工教育经费</div>
<div class="t" style="left:916px;top:412.0px;width:115px;text-align:right;font-size:11.5px;color:#444">0.08</div>
<div class="a" style="left:408px;top:436px;width:1097px;height:1px;background:#222"></div>
<div class="a" style="left:409px;top:437px;width:272px;height:40px;background:#f2f2f2"></div>
<div class="a" style="left:1270px;top:437px;width:117px;height:40px;background:#f4f4f4"></div>
<div class="a" style="left:1387px;top:437px;width:118px;height:40px;background:#f4f4f4"></div>
<div class="t" style="left:408px;top:451.0px;width:49px;text-align:center;font-size:11px;color:#333">6</div>
<div class="t" style="left:459px;top:460px;font-size:11.3px;letter-spacing:0.36px;font-weight:bold;color:#333">按税收规定全额扣除的职工培训费用</div>
<div class="t" style="left:916px;top:451.0px;width:115px;text-align:right;font-size:11.5px;color:#444">1</div>
<div class="t" style="left:1387px;top:452.0px;width:116px;text-align:right;font-size:12px;color:#555">*</div>
<div class="a" style="left:408px;top:476px;width:1097px;height:1px;background:#222"></div>
<div class="a" style="left:409px;top:477px;width:272px;height:23px;background:#f2f2f2"></div>
<div class="a" style="left:1270px;top:477px;width:117px;height:23px;background:#f4f4f4"></div>
<div class="a" style="left:1387px;top:477px;width:118px;height:23px;background:#f4f4f4"></div>
<div class="t" style="left:408px;top:482.5px;width:49px;text-align:center;font-size:11px;color:#333">7</div>
<div class="t" style="left:459px;top:482.5px;font-size:11.3px;letter-spacing:0.5px;font-weight:bold;color:#333">四、工会经费支出</div>
<div class="t" style="left:916px;top:482.5px;width:115px;text-align:right;font-size:11.5px;color:#444">0.02</div>
<div class="t" style="left:1387px;top:483.5px;width:116px;text-align:right;font-size:12px;color:#555">*</div>
<div class="a" style="left:408px;top:499px;width:1097px;height:1px;background:#222"></div>
<div class="a" style="left:409px;top:500px;width:272px;height:25px;background:#f2f2f2"></div>
<div class="a" style="left:916px;top:500px;width:118px;height:25px;background:#f2f2f2"></div>
<div class="a" style="left:1270px;top:500px;width:117px;height:25px;background:#f4f4f4"></div>
<div class="a" style="left:1387px;top:500px;width:118px;height:25px;background:#f4f4f4"></div>
<div class="t" style="left:408px;top:506.5px;width:49px;text-align:center;font-size:11px;color:#333">8</div>
<div class="t" style="left:459px;top:506.5px;font-size:11.3px;letter-spacing:0.5px;font-weight:bold;color:#333">五、各类基本社会保障性缴款</div>
<div class="t" style="left:916px;top:507.5px;width:116px;text-align:right;font-size:12px;color:#555">*</div>
<div class="t" style="left:1387px;top:507.5px;width:116px;text-align:right;font-size:12px;color:#555">*</div>
<div class="a" style="left:408px;top:524px;width:1097px;height:1px;background:#222"></div>
<div class="a" style="left:409px;top:525px;width:272px;height:23px;background:#f2f2f2"></div>
<div class="a" style="left:916px;top:525px;width:118px;height:23px;background:#f2f2f2"></div>
<div class="a" style="left:1270px;top:525px;width:117px;height:23px;background:#f4f4f4"></div>
<div class="a" style="left:1387px;top:525px;width:118px;height:23px;background:#f4f4f4"></div>
<div class="t" style="left:408px;top:530.5px;width:49px;text-align:center;font-size:11px;color:#333">9</div>
<div class="t" style="left:459px;top:530.5px;font-size:11.3px;letter-spacing:0.5px;font-weight:bold;color:#333">六、住房公积金</div>
<div class="t" style="left:916px;top:531.5px;width:116px;text-align:right;font-size:12px;color:#555">*</div>
<div class="t" style="left:1387px;top:531.5px;width:116px;text-align:right;font-size:12px;color:#555">*</div>
<div class="a" style="left:408px;top:547px;width:1097px;height:1px;background:#222"></div>
<div class="a" style="left:409px;top:548px;width:272px;height:24px;background:#f2f2f2"></div>
<div class="a" style="left:1270px;top:548px;width:117px;height:24px;background:#f4f4f4"></div>
<div class="a" style="left:1387px;top:548px;width:118px;height:24px;background:#f4f4f4"></div>
<div class="t" style="left:408px;top:554.0px;width:49px;text-align:center;font-size:11px;color:#333">10</div>
<div class="t" style="left:459px;top:554.0px;font-size:11.3px;letter-spacing:0.5px;font-weight:bold;color:#333">七、补充养老保险</div>
<div class="t" style="left:916px;top:554.0px;width:115px;text-align:right;font-size:11.5px;color:#444">0.05</div>
<div class="t" style="left:1387px;top:555.0px;width:116px;text-align:right;font-size:12px;color:#555">*</div>
<div class="a" style="left:408px;top:571px;width:1097px;height:1px;background:#222"></div>
<div class="a" style="left:409px;top:572px;width:272px;height:24px;background:#f2f2f2"></div>
<div class="a" style="left:1270px;top:572px;width:117px;height:24px;background:#f4f4f4"></div>
<div class="a" style="left:1387px;top:572px;width:118px;height:24px;background:#f4f4f4"></div>
<div class="t" style="left:408px;top:578.0px;width:49px;text-align:center;font-size:11px;color:#333">11</div>
<div class="t" style="left:459px;top:578.0px;font-size:11.3px;letter-spacing:0.5px;font-weight:bold;color:#333">八、补充医疗保险</div>
<div class="t" style="left:916px;top:578.0px;width:115px;text-align:right;font-size:11.5px;color:#444">0.05</div>
<div class="t" style="left:1387px;top:579.0px;width:116px;text-align:right;font-size:12px;color:#555">*</div>
<div class="a" style="left:408px;top:595px;width:1097px;height:1px;background:#222"></div>
<div class="a" style="left:409px;top:596px;width:272px;height:24px;background:#f2f2f2"></div>
<div class="a" style="left:916px;top:596px;width:118px;height:24px;background:#f2f2f2"></div>
<div class="a" style="left:1270px;top:596px;width:117px;height:24px;background:#f4f4f4"></div>
<div class="a" style="left:1387px;top:596px;width:118px;height:24px;background:#f4f4f4"></div>
<div class="t" style="left:408px;top:602.0px;width:49px;text-align:center;font-size:11px;color:#333">12</div>
<div class="t" style="left:459px;top:602.0px;font-size:11.3px;letter-spacing:0.5px;font-weight:bold;color:#333">九、其他</div>
<div class="t" style="left:916px;top:603.0px;width:116px;text-align:right;font-size:12px;color:#555">*</div>
<div class="a" style="left:408px;top:619px;width:1097px;height:1px;background:#222"></div>
<div class="a" style="left:409px;top:620px;width:272px;height:23px;background:#f2f2f2"></div>
<div class="a" style="left:681px;top:620px;width:118px;height:23px;background:#f2f2f2"></div>
<div class="a" style="left:799px;top:620px;width:117px;height:23px;background:#f2f2f2"></div>
<div class="a" style="left:916px;top:620px;width:118px;height:23px;background:#f2f2f2"></div>
<div class="a" style="left:1034px;top:620px;width:118px;height:23px;background:#f2f2f2"></div>
<div class="a" style="left:1152px;top:620px;width:118px;height:23px;background:#f2f2f2"></div>
<div class="a" style="left:1270px;top:620px;width:117px;height:23px;background:#f4f4f4"></div>
<div class="a" style="left:1387px;top:620px;width:118px;height:23px;background:#f4f4f4"></div>
<div class="t" style="left:408px;top:625.5px;width:49px;text-align:center;font-size:11px;color:#333">13</div>
<div class="t" style="left:459px;top:625.5px;font-size:11.3px;letter-spacing:0.84px;font-weight:normal;color:#333">合计(1+3+4+7+8+9+10+11+12)</div>
<div class="t" style="left:916px;top:626.5px;width:116px;text-align:right;font-size:12px;color:#555">*</div>
<div class="a" style="left:408px;top:642px;width:1097px;height:1px;background:#222"></div>
<div class="a" style="left:456px;top:304px;width:2px;height:339px;background:#767676"></div>
<div class="a" style="left:680px;top:304px;width:2px;height:339px;background:#767676"></div>
<div class="a" style="left:798px;top:304px;width:2px;height:339px;background:#767676"></div>
<div class="a" style="left:915px;top:304px;width:2px;height:339px;background:#767676"></div>
<div class="a" style="left:1033px;top:304px;width:2px;height:339px;background:#767676"></div>
<div class="a" style="left:1151px;top:304px;width:2px;height:339px;background:#767676"></div>
<div class="a" style="left:1269px;top:304px;width:2px;height:339px;background:#767676"></div>
<div class="a" style="left:1386px;top:304px;width:2px;height:339px;background:#767676"></div>
<div class="a" style="left:1504px;top:304px;width:2px;height:339px;background:#767676"></div>
<div class="a" style="left:408px;top:303.5px;width:1097px;height:1.5px;background:#111"></div>
<div class="a" style="left:1821px;top:154px;width:14px;height:746px;background:#fff;border-left:1px solid #a0a0a0;border-right:1px solid #e8e8e8"></div>
<div class="a" style="left:1821px;top:167px;width:14px;height:2px;background:#a8a8a8"></div>
<div class="a" style="left:1821px;top:885px;width:14px;height:1px;background:#a8a8a8"></div>
<div class="a" style="left:1821px;top:899px;width:14px;height:1px;background:#a8a8a8"></div>
<svg style="left:1825px;top:158px" width="7" height="4" viewBox="0 0 7 4"><path d="M3.5 0 L7 4 H0 Z" fill="#555"/></svg>
<svg style="left:1825px;top:891px" width="7" height="4" viewBox="0 0 7 4"><path d="M0 0 H7 L3.5 4 Z" fill="#555"/></svg>
<svg style="left:395px;top:910px" width="5" height="7" viewBox="0 0 5 7"><path d="M5 0 V7 L0 3.5 Z" fill="#bbb"/></svg>
<svg style="left:422px;top:910px" width="5" height="7" viewBox="0 0 5 7"><path d="M0 0 V7 L5 3.5 Z" fill="#bbb"/></svg>
<div class="a" style="left:465px;top:900px;width:163px;height:24px;background:#fff;border-left:1px solid #b4b4b4;border-right:1px solid #b4b4b4"></div>
<div class="a" style="left:465px;top:921px;width:163px;height:2px;background:#217346"></div>
<div class="t" style="left:465px;top:904.5px;width:163px;text-align:center;font-size:12.5px;letter-spacing:-0.45px;font-weight:normal;color:#217346;-webkit-text-stroke:0.45px #217346">职工薪酬纳税调整明细表</div>
<svg style="left:1079px;top:909px" width="3" height="10" viewBox="0 0 3 10"><rect x="0.5" y="0" width="2" height="2" fill="#777"/><rect x="0.5" y="4" width="2" height="2" fill="#777"/><rect x="0.5" y="8" width="2" height="2" fill="#777"/></svg>
<div class="a" style="left:1094px;top:907px;width:723px;height:14px;background:#fff;border:1px solid #a8a8a8;border-radius:2px"></div>
<div class="a" style="left:1108px;top:907px;width:1px;height:14px;background:#a8a8a8"></div>
<div class="a" style="left:1803px;top:907px;width:1px;height:14px;background:#a8a8a8"></div>
<svg style="left:1099px;top:910px" width="4" height="7" viewBox="0 0 4 7"><path d="M4 0 V7 L0 3.5 Z" fill="#666"/></svg>
<svg style="left:1808px;top:910px" width="4" height="7" viewBox="0 0 4 7"><path d="M0 0 V7 L4 3.5 Z" fill="#666"/></svg>
<div class="a" style="left:1838px;top:153px;width:17px;height:28px;background:#e3e8f3;box-shadow:-2px 2px 4px rgba(0,0,0,0.15)"></div>
<svg style="left:1839px;top:162px" width="10" height="10" viewBox="0 0 10 10"><path d="M0.5 0.5 L4.5 5 L0.5 9.5 M4.5 0.5 L8.5 5 L4.5 9.5" fill="none" stroke="#a8aec0" stroke-width="0.9"/></svg>
<div class="a" style="left:1855px;top:153px;width:57px;height:398px;background:#fff;box-shadow:0 2px 5px rgba(0,0,0,0.18)"></div>
<div class="a" style="left:1875px;top:160px;width:19px;height:19px;border-radius:50%;background:#3ec6dc"></div>
<svg style="left:1879px;top:163px" width="11" height="12" viewBox="0 0 11 12"><path d="M1 5.5 L5.5 1 L10 5.5 M1 10.5 L5.5 6 L10 10.5" fill="none" stroke="#fff" stroke-width="1.3"/></svg>
<div class="a" style="left:1875px;top:529px;width:19px;height:19px;border-radius:50%;background:#3ec6dc"></div>
<svg style="left:1879px;top:533px" width="11" height="12" viewBox="0 0 11 12"><path d="M1 1 L5.5 5.5 L10 1 M1 6 L5.5 10.5 L10 6" fill="none" stroke="#fff" stroke-width="1.3"/></svg>
<div class="t" style="left:1854px;top:199.0px;width:58px;text-align:center;font-size:11.5px;color:#c0c0c0">2015年</div>
<div class="t" style="left:1854px;top:233.1px;width:58px;text-align:center;font-size:11.5px;color:#c0c0c0">2016年</div>
<div class="t" style="left:1854px;top:267.2px;width:58px;text-align:center;font-size:11.5px;color:#c0c0c0">2017年</div>
<div class="t" style="left:1854px;top:301.3px;width:58px;text-align:center;font-size:11.5px;color:#c0c0c0">2018年</div>
<div class="t" style="left:1854px;top:335.4px;width:58px;text-align:center;font-size:11.5px;color:#c0c0c0">2019年</div>
<div class="t" style="left:1854px;top:369.5px;width:58px;text-align:center;font-size:11.5px;color:#111">2020年</div>
<div class="t" style="left:1854px;top:403.6px;width:58px;text-align:center;font-size:11.5px;color:#111">2021年</div>
<div class="a" style="left:1860px;top:431.20000000000005px;width:47px;height:23px;border-radius:12px;background:#3ec6dc"></div>
<div class="t" style="left:1854px;top:437.70000000000005px;width:58px;text-align:center;font-size:11.5px;color:#fff">2022年</div>
<div class="t" style="left:1854px;top:471.8px;width:58px;text-align:center;font-size:11.5px;color:#111">2023年</div>
<div class="t" style="left:1854px;top:505.90000000000003px;width:58px;text-align:center;font-size:11.5px;color:#c0c0c0">2024年</div>
</body></html>
